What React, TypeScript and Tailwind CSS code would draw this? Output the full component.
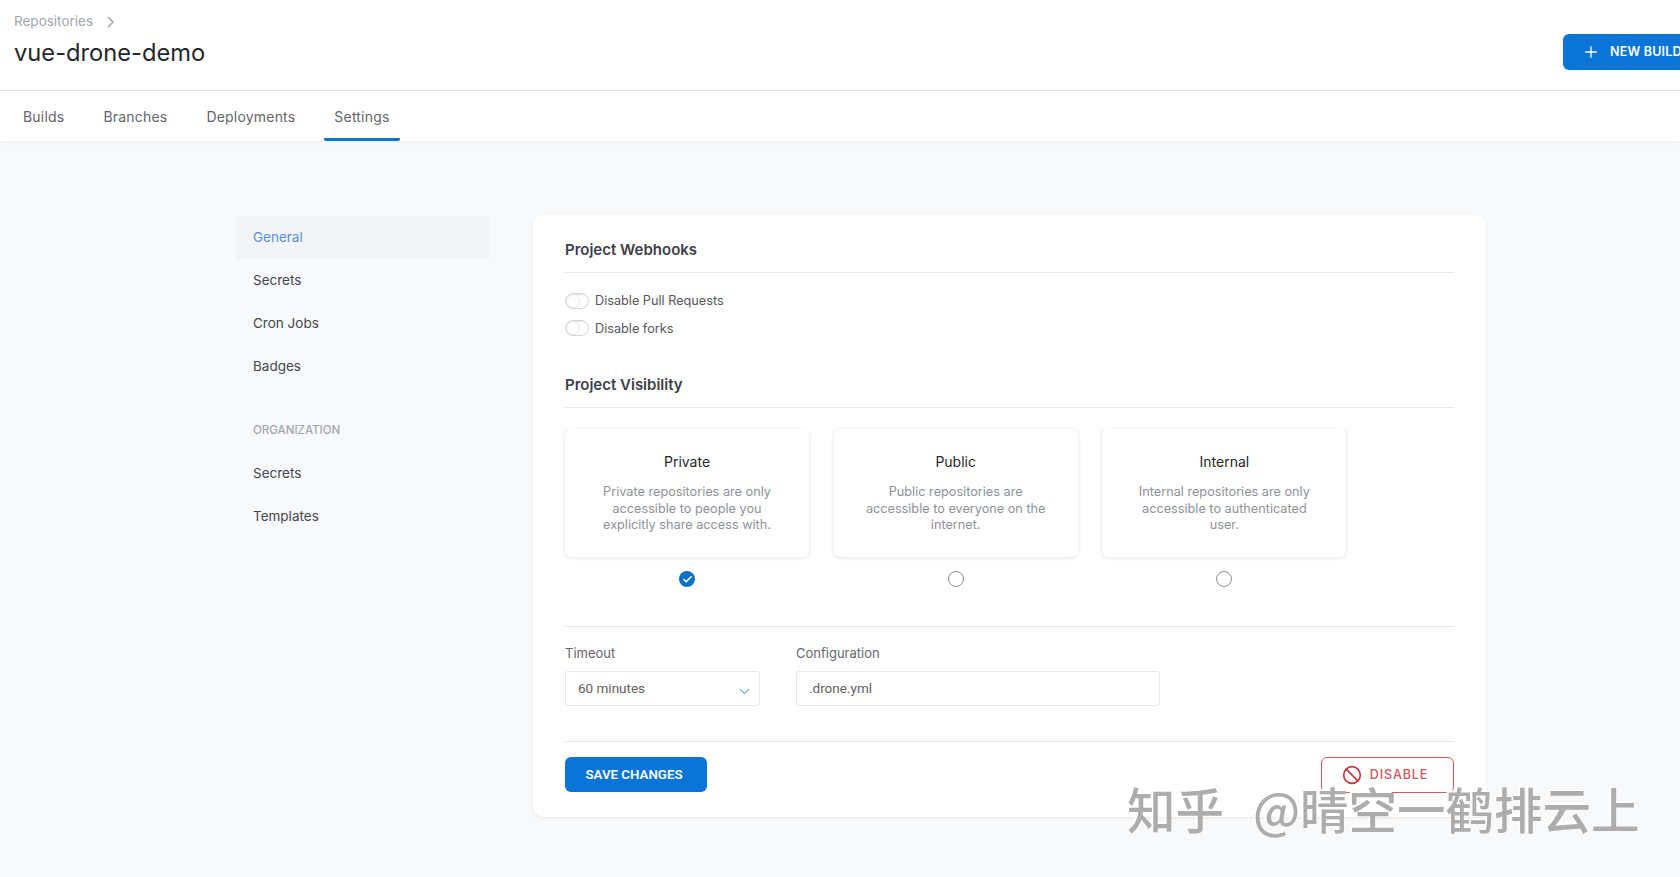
import { Ban, Check, ChevronDown, Plus } from 'lucide-react';

const tabs = ['Builds', 'Branches', 'Deployments', 'Settings'];

const visibility = [
  { name: 'Private', text: ['Private repositories are only', 'accessible to people you', 'explicitly share access with.'], checked: true },
  { name: 'Public', text: ['Public repositories are', 'accessible to everyone on the', 'internet.'], checked: false },
  { name: 'Internal', text: ['Internal repositories are only', 'accessible to authenticated', 'user.'], checked: false },
];

function SideLink({ label, active }: { label: string; active?: boolean }) {
  return (
    <div className={`h-[43px] flex items-center px-[17px] rounded text-[13.5px] ${active ? 'bg-[#f3f4f8] text-[#5c8fd0]' : 'text-[#44454d]'}`}>
      {label}
    </div>
  );
}

function Toggle({ label }: { label: string }) {
  return (
    <div className="h-[27.5px] flex items-center">
      <div className="w-[24px] h-[16px] rounded-full border border-[#d4d5d9] bg-white shadow-[inset_2px_1px_2px_rgba(0,0,0,0.12)] mr-[6px] flex items-center">
        <div className="w-[14px] h-[14px] rounded-full bg-white border border-[#e6e7ea]" />
      </div>
      <span className="text-[12.7px] text-[#55565e]">{label}</span>
    </div>
  );
}

export default function App() {
  return (
    <div className="relative h-[877px] overflow-hidden bg-[#f8f9fb] font-['Inter',sans-serif]">
      {/* Header */}
      <div className="h-[91px] bg-white border-b border-[#e3e4e8] flex justify-between pl-[14px]">
        <div>
          <div className="pt-[11px] h-[32px] flex items-center text-[13.5px] text-[#a4a6ae]">
            Repositories
            <svg className="ml-[13px] w-[9px] h-[12px]" viewBox="0 0 9 12" fill="none" stroke="#a4a6ae" strokeWidth="1.6">
              <path d="M2 1l5 5-5 5" />
            </svg>
          </div>
          <h1 className="mt-[5px] text-[23.7px] leading-[32px] text-[#26272e]">vue-drone-demo</h1>
        </div>
        <button className="mt-[34px] mr-[-26px] h-[36px] w-[143px] shrink-0 rounded-[6px] bg-[#0a75d6] text-white text-[12.5px] font-semibold tracking-[0.2px] flex items-center pl-[19px]">
          <Plus className="w-[18px] h-[18px] mr-[10px]" strokeWidth={1.8} />
          NEW BUILD
        </button>
      </div>

      {/* Tabs */}
      <div className="h-[50px] bg-white shadow-[0_1px_4px_rgba(0,0,0,0.06)] flex gap-[19px] pl-[13px]">
        {tabs.map((tab) => (
          <div
            key={tab}
            className={`px-[10px] flex items-center text-[14px] tracking-[0.2px] text-[#63646c] border-b-[3px] pt-[3px] ${tab === 'Settings' ? 'border-[#0a75d6] rounded-b-[2px]' : 'border-transparent'}`}
          >
            {tab}
          </div>
        ))}
      </div>

      {/* Body */}
      <div className="flex pl-[236px] pt-[74px]">
        <div className="w-[254px] mr-[43px] mt-[1px]">
          <SideLink label="General" active />
          <SideLink label="Secrets" />
          <SideLink label="Cron Jobs" />
          <SideLink label="Badges" />
          <div className="h-[64px] pt-[22px] flex items-center px-[17px] text-[11.5px] font-medium text-[#a5a7b0]">ORGANIZATION</div>
          <SideLink label="Secrets" />
          <SideLink label="Templates" />
        </div>

        <div className="w-[953px] h-[602px] bg-white rounded-[10px] shadow-[0_1px_3px_rgba(0,0,0,0.08)] px-[32px]">
          <h2 className="pt-[24px] h-[58px] text-[15px] leading-[22px] font-semibold text-[#3c3e48] border-b border-[#e6e7ea]">Project Webhooks</h2>
          <div className="pt-[14px]">
            <Toggle label="Disable Pull Requests" />
            <Toggle label="Disable forks" />
          </div>
          <h2 className="mt-[32px] h-[34px] text-[15px] leading-[22px] font-semibold text-[#3c3e48] border-b border-[#e6e7ea]">Project Visibility</h2>

          <div className="flex gap-[24.7px] mt-[21px]">
            {visibility.map((v) => (
              <div key={v.name} className="w-[244px]">
                <div className="h-[128px] rounded-[6px] bg-white shadow-[0_1px_4px_rgba(0,0,0,0.11)] pt-[23px] text-center">
                  <div className="text-[14px] leading-[20px] text-[#26272e]">{v.name}</div>
                  <div className="mt-[12px] text-[12.7px] leading-[16.5px] text-[#8f9199]">
                    {v.text.map((line) => (
                      <div key={line}>{line}</div>
                    ))}
                  </div>
                </div>
                <div className="mt-[14px] flex justify-center">
                  {v.checked ? (
                    <div className="w-[16px] h-[16px] rounded-full bg-[#0a70c8] flex items-center justify-center">
                      <Check className="w-[11px] h-[11px] text-white" strokeWidth={3.5} />
                    </div>
                  ) : (
                    <div className="w-[16px] h-[16px] rounded-full border border-[#8f9096] bg-white" />
                  )}
                </div>
              </div>
            ))}
          </div>

          <div className="mt-[39px] border-t border-[#e6e7ea] pt-[17px] flex gap-[36px] h-[115px]">
            <div>
              <div className="text-[13px] leading-[18px] text-[#66676e] mb-[9px]">Timeout</div>
              <div className="w-[195px] h-[35px] rounded-[3px] border border-[#e6e7ea] flex items-center justify-between pl-[12px] pr-[6px] text-[13.5px] text-[#5f6066] font-['Roboto',sans-serif]">
                60 minutes
                <ChevronDown className="w-[17px] h-[17px] mt-[6px] text-[#6ab7dc]" strokeWidth={1.8} />
              </div>
            </div>
            <div>
              <div className="text-[13px] leading-[18px] text-[#66676e] mb-[9px]">Configuration</div>
              <div className="w-[364px] h-[35px] rounded-[3px] border border-[#e6e7ea] flex items-center pl-[12px] text-[13.5px] text-[#5f6066] font-['Roboto',sans-serif]">
                .drone.yml
              </div>
            </div>
          </div>

          <div className="border-t border-[#e6e7ea] pt-[15px] flex justify-between items-start">
            <button className="w-[142px] h-[35px] rounded-[6px] bg-[#0a75d6] text-white text-[13.3px] font-semibold font-['Roboto',sans-serif] pr-[4px]">
              SAVE CHANGES
            </button>
            <button className="w-[133px] h-[36px] rounded-[6px] border border-[#cf5c5c] bg-white text-[#c9585e] text-[12.5px] font-medium tracking-[0.9px] flex items-center justify-center gap-[8px] pr-[5px]">
              <Ban className="w-[20px] h-[20px] text-[#c4383e]" strokeWidth={2} />
              DISABLE
            </button>
          </div>
        </div>
      </div>

      {/* Watermark */}
      <div className="absolute left-[1127px] top-[773px] whitespace-nowrap text-[48.5px] leading-[70px] [word-spacing:18px] font-medium text-[#adadad] font-['Noto_Sans_CJK_SC',sans-serif] [text-shadow:-2px_-2px_0_#fff]">
        知乎 @晴空一鹤排云上
      </div>
    </div>
  );
}
